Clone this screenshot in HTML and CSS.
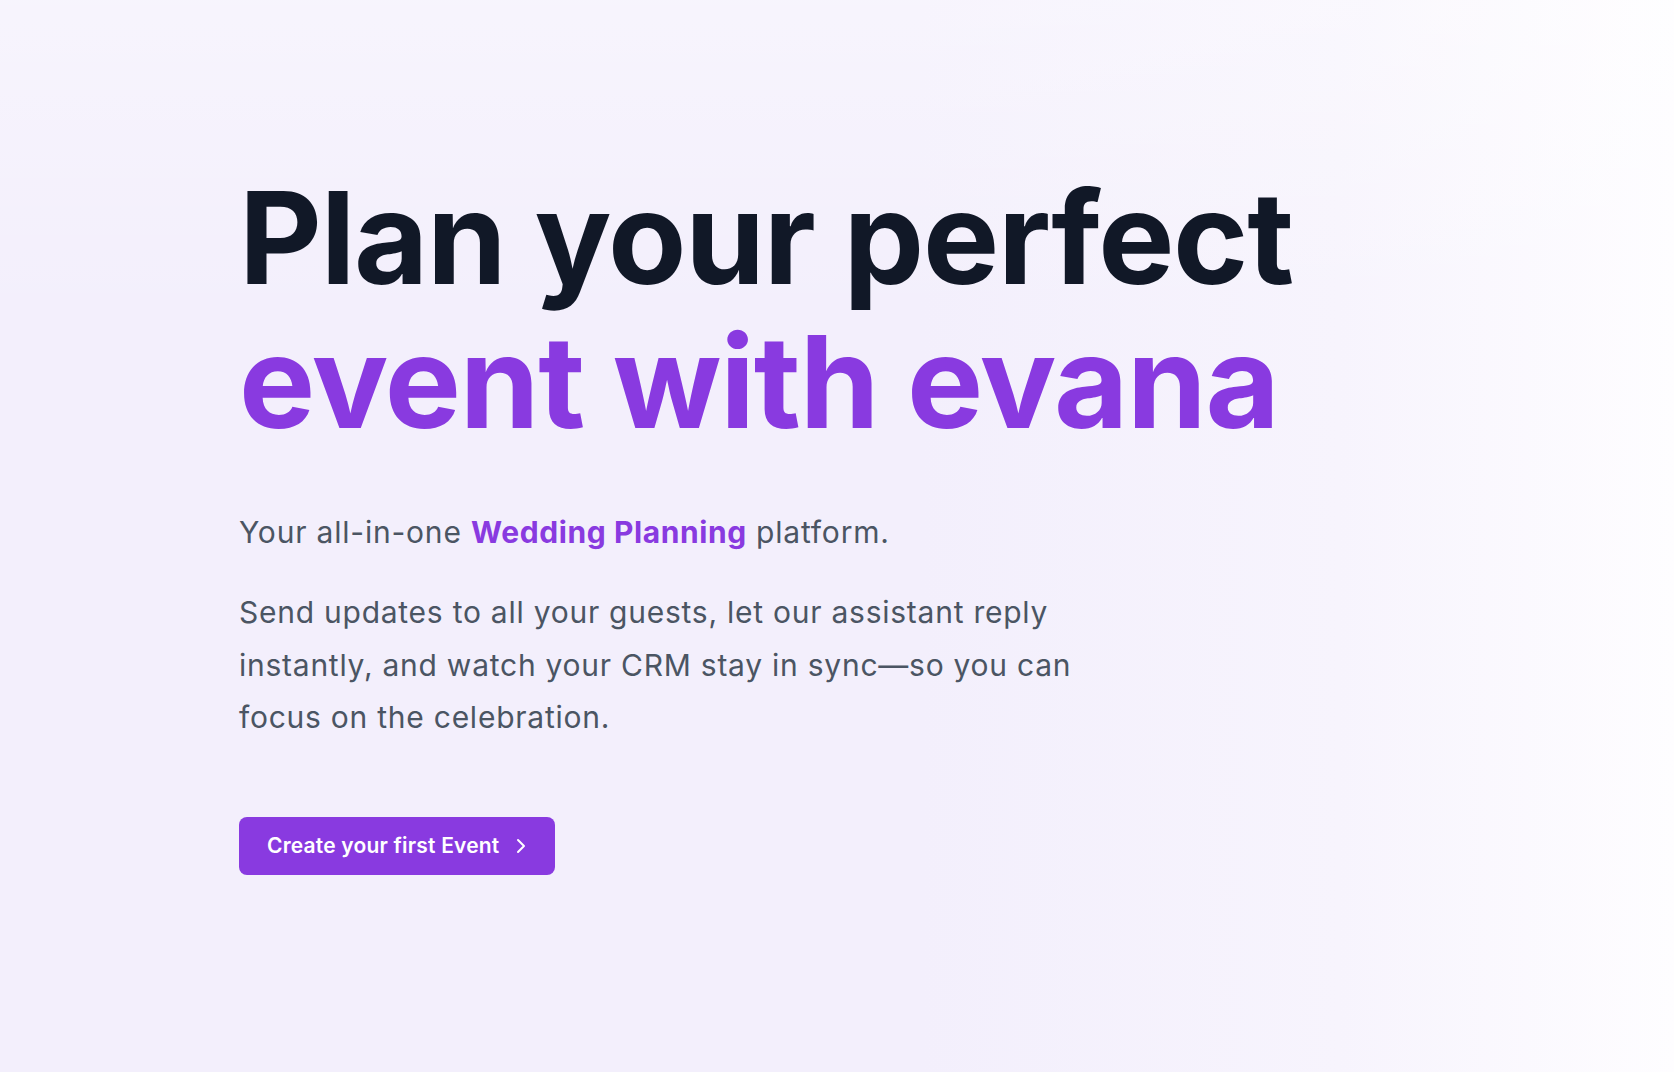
FILE: index.html
```html
<!DOCTYPE html>
<html lang="en">
<head>
<meta charset="utf-8">
<title>evana</title>
<link rel="stylesheet" href="styles.css">
</head>
<body>
<main class="hero">
  <div class="hero-inner">
    <h1 class="title">
      <span class="title-dark">Plan your perfect</span>
      <span class="title-accent">event with evana</span>
    </h1>
    <p class="lead">Your all-in-one <strong class="accent">Wedding Planning</strong> platform.</p>
    <p class="body">Send updates to all your guests, let our assistant reply instantly, and watch your CRM stay in sync—so you can focus on the celebration.</p>
    <div class="actions">
      <a class="btn" href="#">
        <span>Create your first Event</span>
        <svg class="btn-icon" viewBox="0 0 24 24" width="24" height="24" fill="none" stroke="currentColor" stroke-width="2" stroke-linecap="round" stroke-linejoin="round"><path d="m9 18 6-6-6-6"/></svg>
      </a>
    </div>
  </div>
</main>
</body>
</html>
```
FILE: styles.css
```css
* { box-sizing: border-box; }
html, body { margin: 0; padding: 0; }
body {
  font-family: Inter, "Noto Sans", sans-serif;
  color: #111827;
  min-height: 100vh;
  background:
    linear-gradient(to bottom, rgba(255,255,255,0.35), rgba(255,255,255,0) 30%),
    linear-gradient(to right, #f3effc 0%, #f3effc 55%, #f7f4fd 80%, #fefdff 100%);
}
.hero {
  min-height: 1072px;
  padding-top: 166px;
}
.hero-inner {
  max-width: 1196px;
  margin: 0 auto;
}
.title {
  margin: 0;
  font-size: 128px;
  line-height: 144px;
  font-weight: 700;
  letter-spacing: -0.01em;
}
.title span { display: block; }
.title-dark { color: #111827; }
.title-accent { color: #893ae0; }
.lead {
  margin: 52px 0 0;
  font-size: 30px;
  line-height: 52px;
  color: #4b5563;
  letter-spacing: 0.8px;
}
.accent { color: #893ae0; font-weight: 700; letter-spacing: 0.6px; }
.body {
  margin: 28px 0 0;
  max-width: 870px;
  font-size: 30px;
  line-height: 52.5px;
  color: #4b5563;
  letter-spacing: 0.75px;
}
.actions { margin-top: 73px; display: flex; }
.btn {
  display: inline-flex;
  align-items: center;
  gap: 10px;
  height: 58px;
  padding: 0 22px 0 28px;
  border-radius: 8px;
  background: #893ae0;
  color: #ffffff;
  text-decoration: none;
  font-size: 21px;
  font-weight: 600;
  letter-spacing: 0.2px;
}
.btn-icon { width: 24px; height: 24px; }
```
